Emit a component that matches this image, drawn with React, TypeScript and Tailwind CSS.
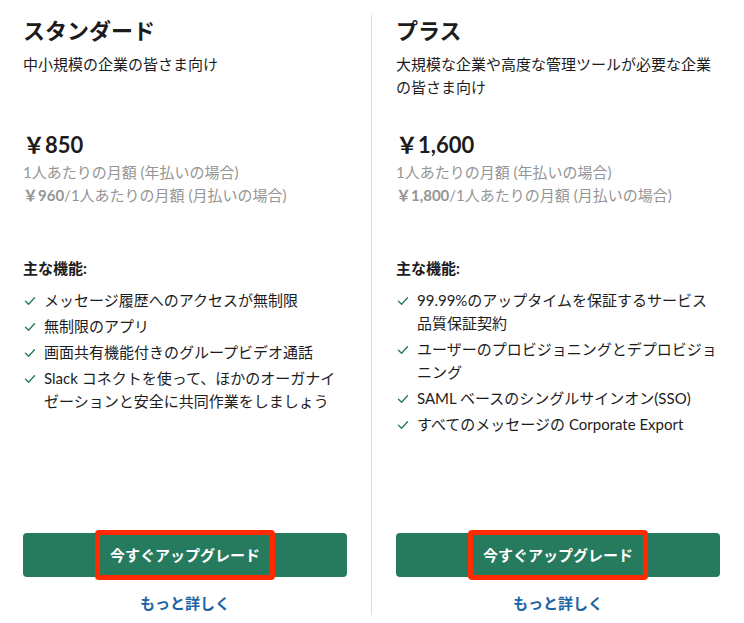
import React from "react";

const font = { fontFamily: "Lato, 'Noto Sans CJK JP', sans-serif" };

function Check() {
  return (
    <svg width="12" height="10" viewBox="0 0 12 10" className="shrink-0 mt-[7px]">
      <polyline points="1.5,5.2 4.6,8.2 10.5,1.8" fill="none" stroke="#2b7a5e" strokeWidth="1.4" strokeLinecap="round" strokeLinejoin="round" />
    </svg>
  );
}

type Plan = {
  name: string;
  desc: string;
  price: string;
  monthly: string;
  features: string[];
};

const plans: Plan[] = [
  {
    name: "スタンダード",
    desc: "中小規模の企業の皆さま向け",
    price: "￥850",
    monthly: "￥960",
    features: [
      "メッセージ履歴へのアクセスが無制限",
      "無制限のアプリ",
      "画面共有機能付きのグループビデオ通話",
      "Slack コネクトを使って、ほかのオーガナイゼーションと安全に共同作業をしましょう",
    ],
  },
  {
    name: "プラス",
    desc: "大規模な企業や高度な管理ツールが必要な企業の皆さま向け",
    price: "￥1,600",
    monthly: "￥1,800",
    features: [
      "99.99%のアップタイムを保証するサービス品質保証契約",
      "ユーザーのプロビジョニングとデプロビジョニング",
      "SAML ベースのシングルサインオン(SSO)",
      "すべてのメッセージの Corporate Export",
    ],
  },
];

function Column({ plan, className }: { plan: Plan; className: string }) {
  return (
    <div className={"flex flex-col pt-[15px] pb-[8px] " + className}>
      <h2 className="text-[22px] leading-[32px] font-bold text-[#1d1c1d]">{plan.name}</h2>
      <p className="mt-[6px] min-h-[46px] text-[15px] leading-[23px] text-[#1d1c1d]">{plan.desc}</p>
      <div className="mt-[31px] text-[22px] leading-[30px] font-bold text-[#1d1c1d]">{plan.price}</div>
      <div className="mt-[1px] text-[15px] leading-[23px] text-[#959595]">
        <div>1人あたりの月額 (年払いの場合)</div>
        <div>
          <span className="font-bold">{plan.monthly}</span>/1人あたりの月額 (月払いの場合)
        </div>
      </div>
      <div className="mt-[50px] text-[15px] leading-[23px] font-bold text-[#1d1c1d]">主な機能:</div>
      <ul className="mt-[9px] flex flex-col gap-[3px]">
        {plan.features.map((f) => (
          <li key={f} className="flex gap-[8px] pl-[1px] text-[15px] leading-[23px] text-[#1d1c1d]">
            <Check />
            <span className="w-[304px]">{f}</span>
          </li>
        ))}
      </ul>
      <div className="mt-auto">
        <button className="flex h-[44px] w-full items-center justify-center rounded-[4px] bg-[#267a5d]">
          <span className="flex h-[50px] items-center rounded-[4px] border-[5px] border-[#ff2a00] px-[10px] text-[15px] font-bold text-white">
            今すぐアップグレード
          </span>
        </button>
        <div className="mt-[15px] text-center text-[15px] leading-[23px] font-bold text-[#1d64a3]">もっと詳しく</div>
      </div>
    </div>
  );
}

export default function App() {
  return (
    <div style={font} className="grid h-[623px] w-[744px] grid-cols-[371px_1px_372px] bg-white">
      <Column plan={plans[0]} className="pl-[23px] pr-[24px]" />
      <div className="mt-[15px] mb-[8px] bg-[#dddddd]" />
      <Column plan={plans[1]} className="pl-[24px] pr-[24px]" />
    </div>
  );
}
